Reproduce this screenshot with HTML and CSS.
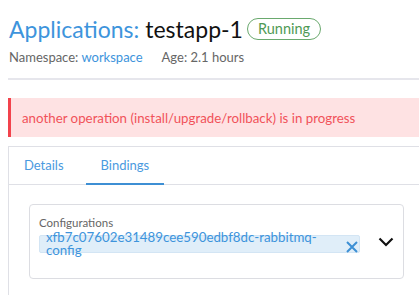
FILE: index.html
```html
<!DOCTYPE html>
<html lang="en">
<head>
    <meta charset="UTF-8">
    <meta name="viewport" content="width=device-width, initial-scale=1.0">
    <title>testapp-1</title>
    <link rel="stylesheet" href="styles.css">
</head>
<body>
    <section class="page">
        <h1 class="title">
            <span class="crumb">Applications:</span>
            <span class="name">testapp-1</span>
            <span class="badge">Running</span>
        </h1>
        <div class="meta">
            <span>Namespace: <a href="#">workspace</a></span>
            <span>Age: 2.1 hours</span>
        </div>
        <div class="divider"></div>

        <div class="alert">another operation (install/upgrade/rollback) is in progress</div>

        <div class="card">
            <div class="tabs">
                <a href="#" class="tab">Details</a>
                <a href="#" class="tab active">Bindings</a>
            </div>
            <div class="card-body">
                <div class="field">
                    <div class="label">Configurations</div>
                    <div class="row">
                        <div class="chip">
                            <span class="chip-text">xfb7c07602e31489cee590edbf8dc-rabbitmq-config</span>
                            <svg class="chip-x" width="12" height="12" viewBox="0 0 12 12">
                                <path d="M1 1 L11 11 M11 1 L1 11" stroke="#3d8fd4" stroke-width="2" fill="none"/>
                            </svg>
                        </div>
                        <svg class="chevron" width="16" height="10" viewBox="0 0 16 10">
                            <path d="M1.5 1.5 L8 8 L14.5 1.5" stroke="#111" stroke-width="2.2" fill="none"/>
                        </svg>
                    </div>
                </div>
            </div>
        </div>
    </section>
</body>
</html>
```

FILE: styles.css
```css
*{
    box-sizing: border-box;
}
body{
    margin: 0;
    padding: 0;
    background-color: #fff;
    font-family: Lato, "Open Sans", sans-serif;
    color: #222;
}
a{
    text-decoration: none;
    color: #3d94dc;
}
.page{
    padding: 14px 0 0 8px;
}
.title{
    margin: 0;
    font-size: 23px;
    font-weight: 400;
    line-height: 30px;
    display: flex;
    align-items: center;
    padding-left: 1px;
}
.crumb{
    color: #3d94dc;
    margin-right: 6px;
}
.name{
    color: #111;
}
.badge{
    margin-left: 4px;
    font-size: 14.5px;
    line-height: 20px;
    color: #4f9a55;
    border: 1px solid #6aa96e;
    border-radius: 12px;
    padding: 0 10px;
}
.meta{
    display: flex;
    gap: 19px;
    font-size: 13px;
    color: #666;
    line-height: 18px;
    margin-top: 4px;
    padding-left: 1px;
}
.divider{
    margin-top: 12px;
    height: 2px;
    background-color: #e6e6ec;
}
.alert{
    margin-top: 18px;
    height: 39px;
    display: flex;
    align-items: center;
    padding-left: 11px;
    border-left: 3px solid #f2434c;
    background-color: #fee2e3;
    color: #f1525a;
    font-size: 13.3px;
}
.card{
    margin-top: 9px;
    border: 1px solid #dfe0e6;
    border-right: none;
    border-bottom: none;
    min-height: 150px;
}
.tabs{
    display: flex;
    gap: 7px;
    height: 38px;
    border-bottom: 1px solid #dfe0e6;
}
.tab{
    display: flex;
    align-items: center;
    padding: 0 15px;
    font-size: 13px;
    color: #4a9ae0;
    border-bottom: 2px solid transparent;
    margin-bottom: -1px;
}
.tab.active{
    border-bottom-color: #3d8fd4;
}
.card-body{
    padding: 19px 15px 0 20px;
}
.field{
    height: 75px;
    border: 1px solid #dcdde2;
    border-radius: 4px;
    padding: 11px 9px 0 9px;
}
.label{
    font-size: 11.5px;
    color: #666;
    line-height: 14px;
}
.row{
    display: flex;
    align-items: center;
    margin-top: 5px;
}
.chip{
    flex: 1;
    height: 18px;
    display: flex;
    align-items: flex-start;
    background-color: #e0eef9;
    border: 1px solid #d3e5f4;
    border-radius: 2px;
    padding-left: 6px;
    padding-right: 1px;
}
.chip-text{
    flex: 1;
    margin-top: -5px;
    font-size: 13.3px;
    line-height: 13px;
    color: #3d94dc;
    word-break: break-word;
}
.chip-x{
    margin-top: 5px;
}
.chevron{
    margin-left: 18px;
    margin-right: 0;
    margin-top: -4px;
}
```
